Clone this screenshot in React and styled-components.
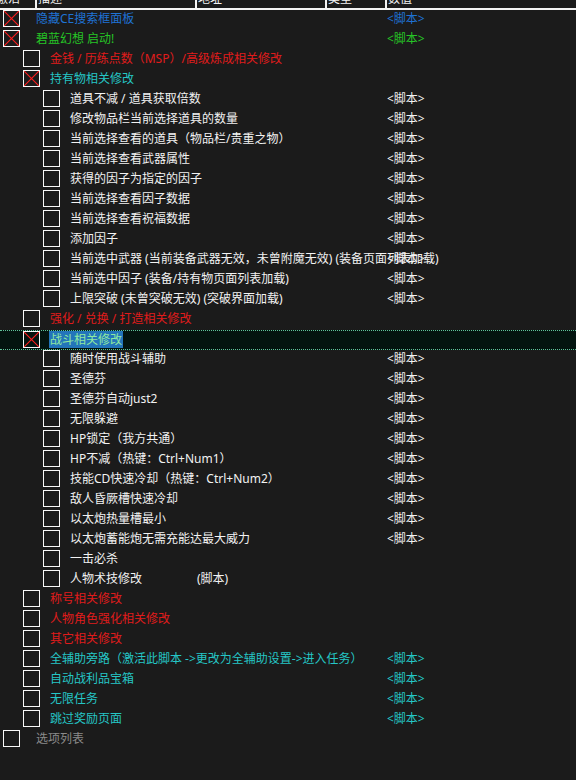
import React from "react";
import styled, { createGlobalStyle } from "styled-components";

const GlobalStyle = createGlobalStyle`
    html, body {
        margin: 0;
        padding: 0;
        background: #1b1b1b;
    }
    body {
        font-family: "Noto Sans", "Noto Sans CJK SC", sans-serif;
        font-size: 12px;
        color: #f2f2f2;
    }
`;

const colors = {
    blue: "#1f72d4",
    green: "#26c426",
    red: "#e01b1b",
    cyan: "#25c6c6",
    white: "#f2f2f2",
    gray: "#8a8a8a",
};

// table data: level, checked, text, color, value, address
const rows = [
    { level: 0, checked: true, text: "隐藏CE搜索框面板", color: "blue", value: "<脚本>" },
    { level: 0, checked: true, text: "碧蓝幻想 启动!", color: "green", value: "<脚本>" },
    { level: 1, text: "金钱 / 历练点数（MSP）/高级炼成相关修改", color: "red" },
    { level: 1, checked: true, text: "持有物相关修改", color: "cyan" },
    { level: 2, text: "道具不减 / 道具获取倍数", value: "<脚本>" },
    { level: 2, text: "修改物品栏当前选择道具的数量", value: "<脚本>" },
    { level: 2, text: "当前选择查看的道具（物品栏/贵重之物）", value: "<脚本>" },
    { level: 2, text: "当前选择查看武器属性", value: "<脚本>" },
    { level: 2, text: "获得的因子为指定的因子", value: "<脚本>" },
    { level: 2, text: "当前选择查看因子数据", value: "<脚本>" },
    { level: 2, text: "当前选择查看祝福数据", value: "<脚本>" },
    { level: 2, text: "添加因子", value: "<脚本>" },
    { level: 2, text: "当前选中武器 (当前装备武器无效，未曾附魔无效) (装备页面列表加载)", value: "<脚本>" },
    { level: 2, text: "当前选中因子 (装备/持有物页面列表加载)", value: "<脚本>" },
    { level: 2, text: "上限突破 (未曾突破无效) (突破界面加载)", value: "<脚本>" },
    { level: 1, text: "强化 / 兑换 / 打造相关修改", color: "red" },
    { level: 1, checked: true, text: "战斗相关修改", selected: true },
    { level: 2, text: "随时使用战斗辅助", value: "<脚本>" },
    { level: 2, text: "圣德芬", value: "<脚本>" },
    { level: 2, text: "圣德芬自动just2", value: "<脚本>" },
    { level: 2, text: "无限躲避", value: "<脚本>" },
    { level: 2, text: "HP锁定（我方共通）", value: "<脚本>" },
    { level: 2, text: "HP不减（热键：Ctrl+Num1）", value: "<脚本>" },
    { level: 2, text: "技能CD快速冷却（热键：Ctrl+Num2）", value: "<脚本>" },
    { level: 2, text: "敌人昏厥槽快速冷却", value: "<脚本>" },
    { level: 2, text: "以太炮热量槽最小", value: "<脚本>" },
    { level: 2, text: "以太炮蓄能炮无需充能达最大威力", value: "<脚本>" },
    { level: 2, text: "一击必杀" },
    { level: 2, text: "人物术技修改", address: "(脚本)" },
    { level: 1, text: "称号相关修改", color: "red" },
    { level: 1, text: "人物角色强化相关修改", color: "red" },
    { level: 1, text: "其它相关修改", color: "red" },
    { level: 1, text: "全辅助旁路（激活此脚本 ->更改为全辅助设置->进入任务）", color: "cyan", value: "<脚本>" },
    { level: 1, text: "自动战利品宝箱", color: "cyan", value: "<脚本>" },
    { level: 1, text: "无限任务", color: "cyan", value: "<脚本>" },
    { level: 1, text: "跳过奖励页面", color: "cyan", value: "<脚本>" },
    { level: 0, text: "选项列表", color: "gray" },
];

const columns = [
    { label: "激活", width: 37, shift: -4 },
    { label: "描述", width: 160 },
    { label: "地址", width: 130 },
    { label: "类型", width: 60 },
    { label: "数值" },
];

const App = () => {
    return (
        <>
            <GlobalStyle />
            <Table>
                <Header>
                    <HeaderInner>
                        {columns.map((col) => (
                            <HeaderCell key={col.label} $width={col.width} $shift={col.shift}>
                                {col.label}
                            </HeaderCell>
                        ))}
                    </HeaderInner>
                </Header>
                {rows.map((row, i) => (
                    <Row key={i} $selected={row.selected}>
                        <TreeCell>
                            <CheckBox $level={row.level}>
                                {row.checked && (
                                    <svg width="15" height="15" viewBox="0 0 15 15">
                                        <path
                                            d="M0 0 L15 15 M15 0 L0 15"
                                            stroke="#ff1e1e"
                                            strokeWidth="1.1"
                                        />
                                    </svg>
                                )}
                            </CheckBox>
                            {row.selected ? (
                                <Highlight $level={row.level}>{row.text}</Highlight>
                            ) : (
                                <Label $level={row.level} $color={colors[row.color || "white"]}>
                                    {row.text}
                                </Label>
                            )}
                        </TreeCell>
                        <AddressCell>{row.address}</AddressCell>
                        <TypeCell />
                        <ValueCell $color={colors[row.color || "white"]}>{row.value}</ValueCell>
                    </Row>
                ))}
            </Table>
        </>
    );
};

export default App;

const Table = styled.div`
    width: 576px;
    min-height: 780px;
    background: #1b1b1b;
    overflow: hidden;
`;

const Header = styled.div`
    height: 8px;
    overflow: hidden;
    border-bottom: 2px solid #f4f4f4;
`;

const HeaderInner = styled.div`
    display: flex;
    margin-top: -10px;
    height: 18px;
`;

const HeaderCell = styled.div`
    box-sizing: border-box;
    ${(p) => (p.$width ? `width: ${p.$width}px; border-right: 2px solid #f4f4f4;` : "flex: 1;")}
    flex-shrink: 0;
    padding-left: ${(p) => (p.$shift ? 0 : 1)}px;
    text-indent: ${(p) => p.$shift || 0}px;
    line-height: 18px;
    color: #f4f4f4;
    white-space: nowrap;
    overflow: hidden;
`;

const Row = styled.div`
    display: grid;
    grid-template-columns: 196px 129px 59px 1fr;
    height: 20px;
    box-sizing: border-box;
    line-height: 17px;
    white-space: nowrap;
    ${(p) =>
        p.$selected &&
        `
        background: #03140f;
        border-top: 1px dotted #5fc39a;
        border-bottom: 1px dotted #5fc39a;
    `}
`;

const TreeCell = styled.div`
    display: flex;
    align-items: flex-start;
    min-width: 0;
    overflow: visible;
`;

const CheckBox = styled.div`
    width: 15px;
    height: 15px;
    flex-shrink: 0;
    border: 1px solid #f8f8f8;
    margin-left: ${(p) => 3 + p.$level * 20}px;
    svg {
        display: block;
    }
`;

const Label = styled.span`
    color: ${(p) => p.$color};
    margin-left: ${(p) => (p.$level === 0 ? 16 : 10)}px;
    position: relative;
    z-index: 1;
`;

const Highlight = styled.span`
    margin-left: ${(p) => (p.$level === 0 ? 16 : 9)}px;
    padding: 0 1px;
    background: #2375ba;
    color: #8fe9a1;
`;

const AddressCell = styled.div`
    padding-left: 1px;
    color: #f2f2f2;
`;

const TypeCell = styled.div``;

const ValueCell = styled.div`
    padding-left: 3px;
    color: ${(p) => p.$color};
`;
